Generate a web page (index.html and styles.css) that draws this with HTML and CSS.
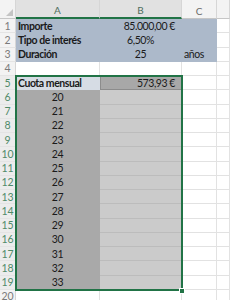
FILE: index.html
```html
<!DOCTYPE html>
<html lang="es">
<head>
<meta charset="utf-8">
<title>Cuota mensual</title>
<link rel="stylesheet" href="styles.css">
</head>
<body>
<div class="sheet">
  <div class="corner"></div><div class="ch sel">A</div><div class="ch sel">B</div><div class="ch">C</div><div class="ch"></div><div class="x"></div>

  <div class="rh">1</div><div class="c blue b">Importe</div><div class="c blue r">85.000,00 €</div><div class="c blue"></div><div class="c"></div><div class="x"></div>
  <div class="rh">2</div><div class="c blue b">Tipo de interés</div><div class="c blue m">6,50%</div><div class="c blue"></div><div class="c"></div><div class="x"></div>
  <div class="rh">3</div><div class="c blue b">Duración</div><div class="c blue m">25</div><div class="c blue">años</div><div class="c"></div><div class="x"></div>
  <div class="rh">4</div><div class="c"></div><div class="c"></div><div class="c"></div><div class="c"></div><div class="x"></div>
  <div class="rh sel">5</div><div class="c lite b">Cuota mensual</div><div class="c gray r">573,93 €</div><div class="c"></div><div class="c"></div><div class="x"></div>
  <div class="rh sel">6</div><div class="c dark m">20</div><div class="c light"></div><div class="c"></div><div class="c"></div><div class="x"></div>
  <div class="rh sel">7</div><div class="c dark m">21</div><div class="c light"></div><div class="c"></div><div class="c"></div><div class="x"></div>
  <div class="rh sel">8</div><div class="c dark m">22</div><div class="c light"></div><div class="c"></div><div class="c"></div><div class="x"></div>
  <div class="rh sel">9</div><div class="c dark m">23</div><div class="c light"></div><div class="c"></div><div class="c"></div><div class="x"></div>
  <div class="rh sel">10</div><div class="c dark m">24</div><div class="c light"></div><div class="c"></div><div class="c"></div><div class="x"></div>
  <div class="rh sel">11</div><div class="c dark m">25</div><div class="c light"></div><div class="c"></div><div class="c"></div><div class="x"></div>
  <div class="rh sel">12</div><div class="c dark m">26</div><div class="c light"></div><div class="c"></div><div class="c"></div><div class="x"></div>
  <div class="rh sel">13</div><div class="c dark m">27</div><div class="c light"></div><div class="c"></div><div class="c"></div><div class="x"></div>
  <div class="rh sel">14</div><div class="c dark m">28</div><div class="c light"></div><div class="c"></div><div class="c"></div><div class="x"></div>
  <div class="rh sel">15</div><div class="c dark m">29</div><div class="c light"></div><div class="c"></div><div class="c"></div><div class="x"></div>
  <div class="rh sel">16</div><div class="c dark m">30</div><div class="c light"></div><div class="c"></div><div class="c"></div><div class="x"></div>
  <div class="rh sel">17</div><div class="c dark m">31</div><div class="c light"></div><div class="c"></div><div class="c"></div><div class="x"></div>
  <div class="rh sel">18</div><div class="c dark m">32</div><div class="c light"></div><div class="c"></div><div class="c"></div><div class="x"></div>
  <div class="rh sel">19</div><div class="c dark m">33</div><div class="c light"></div><div class="c"></div><div class="c"></div><div class="x"></div>
  <div class="rh">20</div><div class="c"></div><div class="c"></div><div class="c"></div><div class="c"></div><div class="x"></div>

  <div class="selection"></div>
  <div class="handle"></div>
</div>
</body>
</html>
```
FILE: styles.css
```css
* { box-sizing: border-box; }
html, body { margin: 0; padding: 0; background: #fff; }
body { width: 246px; height: 300px; overflow: hidden; }

.sheet {
  position: relative;
  display: grid;
  grid-template-columns: 16px 84px 82px 35px 13px 16px;
  grid-template-rows: 19px repeat(20, 14.25px);
  font-family: "Lato", "Liberation Sans", sans-serif;
  font-size: 10.5px;
  letter-spacing: -0.45px;
  color: #1a1a1a;
}

.corner {
  position: relative;
  background: #f3f3f3;
  border-right: 1px solid #d6d6d6;
  border-bottom: 1px solid #c6c6c6;
}
.corner::after {
  content: "";
  position: absolute;
  right: 2px;
  bottom: 2px;
  border-left: 7px solid transparent;
  border-bottom: 7px solid #c4c4c4;
}

.ch {
  display: flex;
  align-items: center;
  justify-content: center;
  background: #f3f3f3;
  border-right: 1px solid #d6d6d6;
  border-bottom: 1px solid #c6c6c6;
  color: #6b6b6b;
  font-size: 10px;
  letter-spacing: 0;
  padding-top: 3px;
}
.ch.sel {
  background: #e1e1e1;
  border-bottom: 2px solid #217346;
  color: #4f6e5c;
}

.rh {
  display: flex;
  align-items: center;
  justify-content: center;
  background: #f3f3f3;
  border-right: 1px solid #d6d6d6;
  border-bottom: 1px solid #e4e4e4;
  color: #7a7a7a;
  font-size: 10.5px;
  letter-spacing: 0;
}
.rh.sel {
  background: #ececec;
  color: #4f8a68;
}

.c {
  display: flex;
  align-items: center;
  padding: 0 2px;
  white-space: nowrap;
  overflow: hidden;
  border-right: 1px solid #e2e2e2;
  border-bottom: 1px solid #e2e2e2;
}
.x { background: #fff; }

.b { font-weight: bold; }
.r { justify-content: flex-end; padding-right: 6px; }
.m { justify-content: center; }

.blue { background: #acb9ca; border-color: #acb9ca; }
.lite { background: #d6dce4; border-color: #d6dce4; }
.gray { background: #a8a8a8; border-color: #8c8c8c; border-left: 1px solid #8c8c8c; }
.dark { background: #a9a9a9; border-color: #a9a9a9; }
.light { background: #cbcbcb; border-right-color: #cbcbcb; border-bottom-color: #bcbcbc; }

.selection {
  position: absolute;
  left: 15px;
  top: 75px;
  width: 168px;
  height: 216px;
  border: 2px solid #217346;
  pointer-events: none;
}
.handle {
  position: absolute;
  left: 179px;
  top: 288px;
  width: 6px;
  height: 6px;
  background: #217346;
  border: 1px solid #fff;
}
```
